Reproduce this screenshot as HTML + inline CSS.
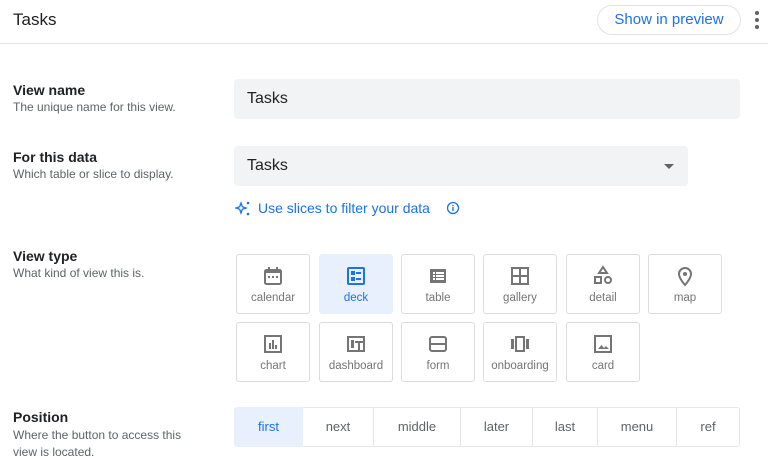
<!DOCTYPE html>
<html><head><meta charset="utf-8"><style>
*{box-sizing:border-box;margin:0;padding:0}
body{width:768px;height:466px;overflow:hidden;background:#fff;font-family:"Liberation Sans",Arial,sans-serif;position:relative;color:#202124}
.a{position:absolute}
.hdr{left:0;top:0;width:768px;height:44px;border-bottom:1px solid #e6e6e6}
.title{left:13px;top:10px;font-size:17px;color:#202124}
.btn{left:597px;top:5px;width:144px;height:30px;border:1px solid #e3e3e3;border-radius:16px;color:#1a73e8;font-size:15px;text-align:center;line-height:28px}
.dots{left:755px;top:11px;width:4px}
.dots i{display:block;width:4px;height:4px;border-radius:2px;background:#5f6368;margin-bottom:3px}
.lbl{left:13px;font-size:14px;font-weight:bold;color:#202124}
.sub{left:13px;font-size:12px;color:#5f6368;line-height:17px}
.inp{background:#f1f3f4;border-radius:4px;font-size:16px;color:#202124;padding-left:13px;line-height:40px;height:40px}
.tile{width:74px;height:60px;border:1px solid #dadce0;border-radius:3px;text-align:center;font-size:11.5px;color:#757575}
.tile svg{display:block;margin:10px auto 5px;width:22px;height:22px}
.tile.sel{background:#e8f0fe;border-color:#e8f0fe;color:#1a73e8}
.seg{top:407px;height:40px;border:1px solid #e6e6e6;border-left:none;font-size:13px;color:#5f6368;text-align:center;line-height:38px}
</style></head><body>
<div class="a hdr"></div>
<div class="a title">Tasks</div>
<div class="a btn">Show in preview</div>
<div class="a dots"><i></i><i></i><i></i></div>

<div class="a lbl" style="top:82px">View name</div>
<div class="a sub" style="top:99px">The unique name for this view.</div>
<div class="a inp" style="left:234px;top:79px;width:506px">Tasks</div>

<div class="a lbl" style="top:149px">For this data</div>
<div class="a sub" style="top:166px">Which table or slice to display.</div>
<div class="a inp" style="left:234px;top:146px;width:454px">Tasks</div>
<div class="a" style="left:664px;top:164px;width:0;height:0;border-left:5px solid transparent;border-right:5px solid transparent;border-top:5px solid #5f6368"></div>
<svg class="a" style="left:235px;top:200px" width="17" height="17" viewBox="0 0 17 17" fill="#1a73e8"><path d="M6 3l1.3 3.7L11 8l-3.7 1.3L6 13l-1.3-3.7L1 8l3.7-1.3z" fill="none" stroke="#1a73e8" stroke-width="1.3"/><circle cx="13" cy="3" r="1.3"/><circle cx="13" cy="14" r="1.3"/></svg>
<div class="a" style="left:258px;top:200px;font-size:14px;color:#1a73e8">Use slices to filter your data</div>
<svg class="a" style="left:446px;top:201px" width="14" height="14" viewBox="0 0 14 14"><circle cx="7" cy="7" r="5.5" fill="none" stroke="#1a73e8" stroke-width="1.3"/><rect x="6.3" y="6" width="1.4" height="4" fill="#1a73e8"/><rect x="6.3" y="3.8" width="1.4" height="1.4" fill="#1a73e8"/></svg>

<div class="a lbl" style="top:248px">View type</div>
<div class="a sub" style="top:265px">What kind of view this is.</div>

<div class="a tile" style="left:236px;top:254px"><svg viewBox="0 0 22 22"><rect x="3" y="5" width="16" height="14" rx="1.5" fill="none" stroke="#757575" stroke-width="2"/><rect x="3" y="5" width="16" height="3" fill="#757575"/><rect x="6" y="2" width="2" height="4" fill="#757575"/><rect x="14" y="2" width="2" height="4" fill="#757575"/><rect x="6" y="11" width="2" height="2" fill="#757575"/><rect x="10" y="11" width="2" height="2" fill="#757575"/><rect x="14" y="11" width="2" height="2" fill="#757575"/></svg>calendar</div>
<div class="a tile sel" style="left:319px;top:254px"><svg viewBox="0 0 22 22"><rect x="3" y="3" width="16" height="16" rx="1" fill="none" stroke="#1a73e8" stroke-width="2"/><rect x="6" y="6" width="4" height="4" fill="#1a73e8"/><rect x="11" y="7" width="5" height="2" fill="#1a73e8"/><rect x="6" y="12" width="4" height="4" fill="#1a73e8"/><rect x="11" y="13" width="5" height="2" fill="#1a73e8"/></svg>deck</div>
<div class="a tile" style="left:401px;top:254px"><svg viewBox="0 0 22 22"><rect x="3" y="4" width="16" height="14" fill="#757575"/><rect x="6" y="7" width="2" height="2" fill="#fff"/><rect x="9" y="7" width="8" height="2" fill="#fff"/><rect x="6" y="10" width="2" height="2" fill="#fff"/><rect x="9" y="10" width="8" height="2" fill="#fff"/><rect x="6" y="13" width="2" height="2" fill="#fff"/><rect x="9" y="13" width="8" height="2" fill="#fff"/></svg>table</div>
<div class="a tile" style="left:483px;top:254px"><svg viewBox="0 0 22 22"><rect x="3" y="3" width="16" height="16" fill="none" stroke="#757575" stroke-width="2"/><path d="M11 3v16M3 11h16" stroke="#757575" stroke-width="2"/></svg>gallery</div>
<div class="a tile" style="left:566px;top:254px"><svg viewBox="0 0 22 22"><path d="M11 2l4 6H7z" fill="none" stroke="#757575" stroke-width="2"/><rect x="3" y="12" width="6" height="6" fill="none" stroke="#757575" stroke-width="2"/><circle cx="16" cy="15" r="3" fill="none" stroke="#757575" stroke-width="2"/></svg>detail</div>
<div class="a tile" style="left:648px;top:254px"><svg viewBox="0 0 22 22"><path d="M11 20s-6-6.5-6-11a6 6 0 0112 0c0 4.5-6 11-6 11z" fill="none" stroke="#757575" stroke-width="2"/><circle cx="11" cy="9" r="2" fill="#757575"/></svg>map</div>

<div class="a tile" style="left:236px;top:322px"><svg viewBox="0 0 22 22"><rect x="3" y="3" width="16" height="16" fill="none" stroke="#757575" stroke-width="2"/><rect x="7" y="10" width="2" height="6" fill="#757575"/><rect x="10" y="7" width="2" height="9" fill="#757575"/><rect x="13" y="12" width="2" height="4" fill="#757575"/></svg>chart</div>
<div class="a tile" style="left:319px;top:322px"><svg viewBox="0 0 22 22"><rect x="3" y="4" width="16" height="14" fill="none" stroke="#757575" stroke-width="2"/><rect x="6" y="7" width="3" height="8" fill="#757575"/><path d="M10 9h8M14 9v8" stroke="#757575" stroke-width="2"/></svg>dashboard</div>
<div class="a tile" style="left:401px;top:322px"><svg viewBox="0 0 22 22"><rect x="3" y="4" width="16" height="14" rx="2" fill="none" stroke="#757575" stroke-width="2"/><path d="M3 11h16" stroke="#757575" stroke-width="2"/></svg>form</div>
<div class="a tile" style="left:483px;top:322px"><svg viewBox="0 0 22 22"><rect x="7" y="4" width="8" height="14" fill="none" stroke="#757575" stroke-width="2"/><rect x="2" y="6" width="3" height="10" fill="#757575"/><rect x="17" y="6" width="3" height="10" fill="#757575"/></svg>onboarding</div>
<div class="a tile" style="left:566px;top:322px"><svg viewBox="0 0 22 22"><rect x="3" y="3" width="16" height="16" fill="none" stroke="#757575" stroke-width="2"/><path d="M6 16l3.5-4 2.5 3 2-2 3 3z" fill="#757575"/></svg>card</div>

<div class="a lbl" style="top:409px">Position</div>
<div class="a sub" style="top:427px">Where the button to access this<br>view is located.</div>
<div class="a seg" style="left:234px;width:69px;background:#e8f0fe;color:#1a73e8;border:1px solid #e8f0fe;border-radius:3px 0 0 3px">first</div>
<div class="a seg" style="left:303px;width:71px">next</div>
<div class="a seg" style="left:374px;width:87px">middle</div>
<div class="a seg" style="left:461px;width:72px">later</div>
<div class="a seg" style="left:533px;width:65px">last</div>
<div class="a seg" style="left:598px;width:79px">menu</div>
<div class="a seg" style="left:677px;width:63px;border-radius:0 3px 3px 0">ref</div>
</body></html>
